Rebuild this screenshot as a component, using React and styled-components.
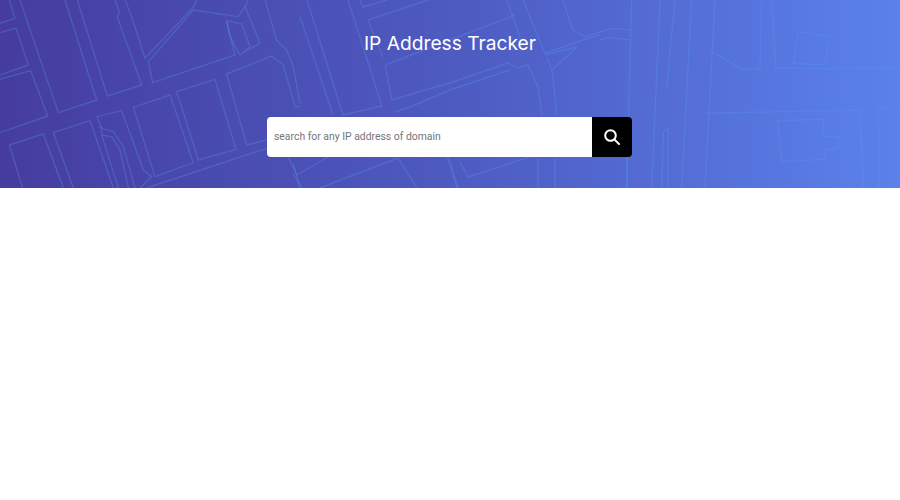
import React from "react";
import styled, { createGlobalStyle } from "styled-components";

const GlobalStyle = createGlobalStyle`
  html, body {
    margin: 0;
    background: #fff;
    font-family: "Roboto", "Liberation Sans", sans-serif;
  }
`

const Header = styled.header`
  position: relative;
  height: 187.5px;
  overflow: hidden;
  display: flex;
  flex-direction: column;
  align-items: center;
  background: linear-gradient(90deg, #463c9f 0%, #4e5cc2 52%, #5b81eb 100%);
`

const MapLines = styled.svg`
  position: absolute;
  top: 0;
  left: 0;
  fill: none;
  stroke: #5b98f2;
  stroke-opacity: 0.3;
  stroke-width: 1.4;
  stroke-linejoin: round;

  path {
    vector-effect: non-scaling-stroke;
  }
`

const Title = styled.h1`
  position: relative;
  margin: 31px 0 0;
  font-family: "Inter", "Liberation Sans", sans-serif;
  font-size: 19.2px;
  line-height: 24px;
  font-weight: 400;
  color: #fff;
`

const SearchForm = styled.form`
  position: relative;
  display: flex;
  width: 365px;
  height: 39.5px;
  margin: 62px 0 0 -1px;
`

const SearchInput = styled.input`
  flex: 1;
  min-width: 0;
  box-sizing: border-box;
  padding: 0 7px;
  border: 0;
  outline: 0;
  border-radius: 4px 0 0 4px;
  background: #fff;
  font-family: inherit;
  font-size: 10.4px;
  color: #333;

  &::placeholder {
    color: #757575;
    opacity: 1;
  }
`

const SearchButton = styled.button`
  display: flex;
  align-items: center;
  justify-content: center;
  width: 40px;
  padding: 0;
  border: 0;
  border-radius: 0 4px 4px 0;
  background: #000;
`

const SearchIcon = () => (
  <svg width="18" height="18" viewBox="0 0 18 18" fill="none" stroke="#fff" strokeWidth="2" strokeLinecap="round">
    <circle cx="7.5" cy="7.5" r="5.3" />
    <path d="M11.6 11.6L16 16" />
  </svg>
)

const App = () => {
  return (
    <>
      <GlobalStyle />
      <Header>
        <MapLines width="900" height="188" viewBox="0 0 900 188">
          {/* left part traced at 3x */}
          <g transform="scale(0.33333)">
            <path d="M0 70L45 55L28 0M0 98L48 84L85 195L0 225M0 238L92 212L143 348L0 398" />
            <path d="M60 0L175 338L290 300L195 0M232 0L322 288L425 255L352 50L358 35L345 0" />
            <path d="M375 0L395 50L435 175L580 22L590 0M445 185L580 30L715 50L735 20L745 0M445 185L458 248L705 165L680 65" />
            <path d="M680 62L725 72L750 140L720 165L690 110ZM735 20L780 130L725 160M795 0L830 120L860 150L880 200L900 310" />
            <path d="M900 320L885 320L850 195L815 168L680 222L740 435L800 420M530 275L645 238L708 448L595 480ZM400 322L510 285L580 488L465 530Z" />
            <path d="M290 350L365 332L430 510L455 530L420 564M160 398L270 362L340 564M160 398L220 564M28 435L130 402L190 564M28 435L68 564" />
            <path d="M295 382L340 395L370 440L405 564M305 405L335 410L360 450L385 564M290 350L305 382L305 405L355 564M440 564L800 445M880 490L900 564" />
          </g>
          {/* middle */}
          <path d="M307 0L343 115L382 106L348 0M300 17L333 115M360 0L363 7L387 0M368 20L428 0M368 20L383 57" />
          <path d="M385 65L515 15M385 65L392 100L415 93L450 83L508 63L517 68L528 65L538 87L542 115M395 112L410 107L450 90L510 70" />
          <path d="M507 0L522 43M523 0L545 53L583 40L600 35M545 55L577 47L552 70M547 58L552 70L557 115M563 0L573 30L585 37L600 32" />
          <path d="M288 157L297 175L328 157M293 173L302 188M320 188L398 158L417 188M447 155L457 188M450 162L458 188M460 162L468 177L530 157M538 158V188M555 158V188M627 158V188" />
          {/* right part traced at 3x */}
          <g transform="translate(600) scale(0.33333)">
            <path d="M95 0L80 564M180 0L155 564M225 0L200 265M275 0L245 564M345 0L315 564M0 95L35 85L90 90M0 120L30 112L90 120" />
            <path d="M335 155L430 208L480 205L485 0M515 0L528 205L900 205M595 95L690 110L675 195L580 190Z" />
            <path d="M315 340L780 330L790 564M533 362L670 358L672 410L715 410L715 445L675 450L675 478L545 485ZM838 564L835 325L900 320M185 564L190 395L205 385L203 564" />
          </g>
        </MapLines>
        <Title>IP Address Tracker</Title>
        <SearchForm onSubmit={(e) => e.preventDefault()}>
          <SearchInput placeholder="search for any IP address of domain" />
          <SearchButton type="submit" aria-label="Search">
            <SearchIcon />
          </SearchButton>
        </SearchForm>
      </Header>
    </>
  )
}

export default App
